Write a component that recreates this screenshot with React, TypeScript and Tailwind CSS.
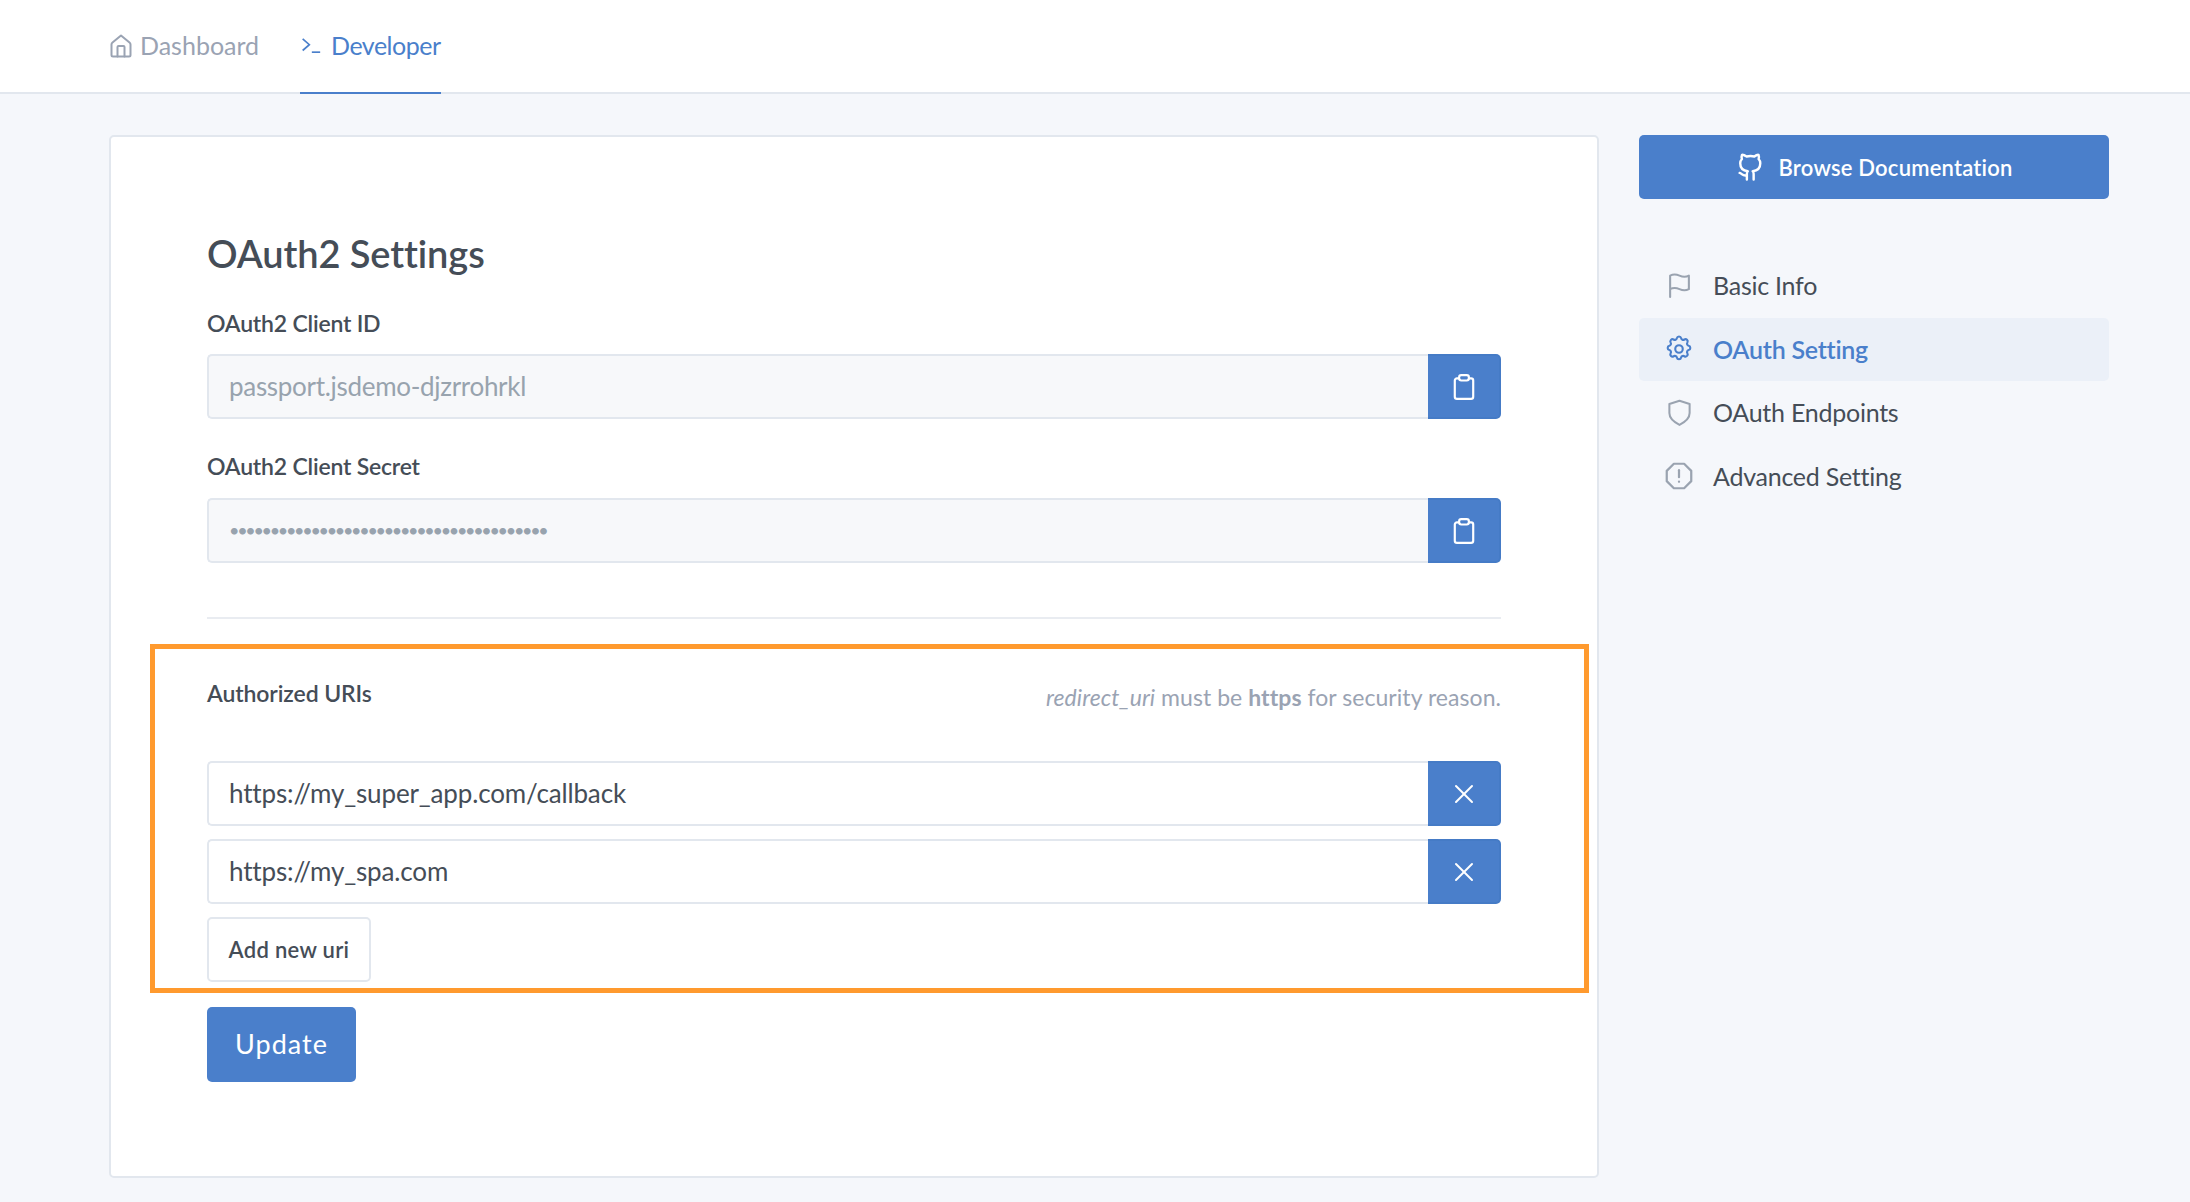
import { FiX } from "react-icons/fi";

function HomeIcon({ className }: { className?: string }) {
  return (
    <svg viewBox="0 0 24 24" fill="none" stroke="currentColor" strokeWidth="2" strokeLinejoin="round" strokeLinecap="round" className={className}>
      <path d="M12 1.500 3.500 8.500c-.6.5-1 1.200-1 2v10.500c0 .8.7 1.500 1.500 1.500h16c.8 0 1.500-.7 1.500-1.500V10.500c0-.8-.4-1.500-1-2z" />
      <path d="M8.500 22.500V13c0-.6.400-1 1-1h5c.6 0 1 .4 1 1v9.500" />
    </svg>
  );
}

function TerminalIcon({ className }: { className?: string }) {
  return (
    <svg viewBox="0 0 24 20" fill="none" stroke="currentColor" strokeWidth="2" className={className}>
      <path d="M2 2l8 7-8 7" />
      <path d="M13 18h10" />
    </svg>
  );
}

function GithubIcon({ className }: { className?: string }) {
  return (
    <svg viewBox="0 0 24 24" fill="none" stroke="currentColor" strokeWidth="2" strokeLinecap="round" strokeLinejoin="round" className={className}>
      <path d="M9 22v-4.500c-.1-.9.200-1.800.800-2.400C6.800 14.800 3.500 13.500 3.500 8.500c0-1.300.5-2.500 1.400-3.500-.4-1.100-.4-2.300.1-3.500 0 0 1.200-.3 3.800 1.400a13 13 0 0 1 6.400 0C17.400 1.200 18.600 1.500 18.600 1.500c.5 1.200.5 2.400.1 3.500.9 1 1.400 2.200 1.400 3.500 0 5-3.300 6.300-6.300 6.600.6.600.9 1.500.800 2.400V22" />
      <path d="M9 18.500c-3.500 1-4-1.500-6-2" />
    </svg>
  );
}

function FlagIcon({ className }: { className?: string }) {
  return (
    <svg viewBox="0 0 24 24" fill="none" stroke="currentColor" strokeWidth="2" strokeLinecap="round" strokeLinejoin="round" className={className}>
      <path d="M3 23V2.500c3-1.500 5.500-1.500 9 0s6 1.500 9 0v13c-3 1.500-5.500 1.500-9 0s-6-1.500-9 0" />
    </svg>
  );
}

function GearIcon({ className }: { className?: string }) {
  return (
    <svg viewBox="0 0 24 24" fill="none" stroke="currentColor" strokeWidth="1.700" strokeLinecap="round" strokeLinejoin="round" className={className}>
      <path d="M10.300 3.300c.4-1.800 3-1.800 3.400 0a1.700 1.700 0 0 0 2.600 1.100c1.500-.9 3.300.8 2.400 2.400a1.700 1.700 0 0 0 1 2.600c1.800.4 1.800 3 0 3.400a1.700 1.700 0 0 0-1 2.600c.9 1.500-.8 3.300-2.400 2.400a1.700 1.700 0 0 0-2.600 1c-.4 1.800-3 1.800-3.400 0a1.700 1.700 0 0 0-2.600-1c-1.500.9-3.300-.8-2.400-2.400a1.700 1.700 0 0 0-1-2.600c-1.800-.4-1.800-3 0-3.400a1.700 1.700 0 0 0 1-2.600c-.9-1.500.8-3.300 2.400-2.400a1.700 1.700 0 0 0 2.600-1.100z" />
      <circle cx="12" cy="12" r="3" />
    </svg>
  );
}

function ShieldIcon({ className }: { className?: string }) {
  return (
    <svg viewBox="0 0 24 24" fill="none" stroke="currentColor" strokeWidth="1.800" strokeLinejoin="round" className={className}>
      <path d="M12 1.500 3 4.500v8c0 4 4 8 9 10.500 5-2.500 9-6.500 9-10.500v-8z" />
    </svg>
  );
}

function AlertIcon({ className }: { className?: string }) {
  return (
    <svg viewBox="0 0 24 24" fill="none" stroke="currentColor" strokeWidth="1.900" strokeLinecap="round" strokeLinejoin="round" className={className}>
      <path d="M7.600 1.500h8.800l6.100 6.100v8.800l-6.100 6.100H7.600l-6.100-6.100V7.600z" />
      <path d="M12 7v6" />
      <path d="M12 16.800v.2" />
    </svg>
  );
}

function ClipboardIcon({ className }: { className?: string }) {
  return (
    <svg viewBox="0 0 24 24" fill="none" stroke="currentColor" strokeWidth="2" strokeLinecap="round" strokeLinejoin="round" className={className}>
      <path d="M7.500 4H5.500a2 2 0 0 0-2 2v15a2 2 0 0 0 2 2h13a2 2 0 0 0 2-2V6a2 2 0 0 0-2-2h-2" />
      <rect x="7.500" y="1" width="9" height="5" rx="2" />
    </svg>
  );
}

function FieldGroup({ value, disabled, icon, masked }: { value: string; disabled?: boolean; icon: "copy" | "remove"; masked?: boolean }) {
  const tone = disabled ? "bg-[#f7f8fa] text-[#98a3ae]" : "bg-white text-[#454d57]";
  const type = masked ? "text-[18px] tracking-[-2.3px]" : disabled ? "text-[26px] tracking-[-0.3px]" : "text-[26px] tracking-[-0.15px]";
  return (
    <div className="flex h-[65px]">
      <div className={`flex min-w-0 flex-1 items-center rounded-l-[5px] border-2 border-r-0 border-[#e2e7ee] pl-[20px] ${tone} ${type}`}>
        {value}
      </div>
      <button type="button" className="flex w-[73px] items-center justify-center rounded-r-[5px] border-2 border-l-0 border-[#457bc6] bg-[#4a7fcb] text-white">
        {icon === "copy" ? <ClipboardIcon className="h-[26px] w-[26px]" /> : <FiX className="h-[32px] w-[32px]" strokeWidth={1.5} />}
      </button>
    </div>
  );
}

const menuItems = [
  { label: "Basic Info", Icon: FlagIcon, size: "h-[25px] w-[25px]" },
  { label: "OAuth Setting", Icon: GearIcon, size: "h-[30px] w-[30px]", active: true },
  { label: "OAuth Endpoints", Icon: ShieldIcon, size: "h-[27px] w-[27px]" },
  { label: "Advanced Setting", Icon: AlertIcon, size: "h-[28px] w-[28px]" },
];

export default function App() {
  return (
    <div className="min-h-[1202px] bg-[#f5f7fb] font-['Lato','Noto_Sans',sans-serif] text-[#454d57]">
      <nav className="flex h-[94px] gap-[41px] border-b-2 border-[#e2e7ee] bg-white pl-[109px]">
        <a className="flex h-[94px] items-center gap-[7px] pb-[2px] text-[25px] text-[#9aa3b3]">
          <HomeIcon className="h-[24px] w-[24px]" />
          Dashboard
        </a>
        <a className="flex h-[94px] items-center gap-[10px] border-b-2 border-[#4a7fcb] pb-[1px] text-[25px] tracking-[-0.5px] text-[#4a7fcb]">
          <TerminalIcon className="ml-[1px] h-[17px] w-[20px]" />
          Developer
        </a>
      </nav>

      <div className="flex items-start pl-[109px] pr-[80px] pt-[41px]">
        <main className="h-[1043px] w-[1490px] rounded-[5px] border-2 border-[#e2e7ee] bg-white pl-[96px] pr-[96px] pt-[92px]">
          <h1 className="text-[38px] font-semibold leading-[48px] tracking-[-0.1px] text-[#454d57]">OAuth2 Settings</h1>

          <label className="mt-[30px] block text-[23px] font-semibold leading-[32px] tracking-[-0.2px]">OAuth2 Client ID</label>
          <div className="mt-[15px]">
            <FieldGroup value="passport.jsdemo-djzrrohrkl" disabled icon="copy" />
          </div>

          <label className="mt-[31px] block text-[23px] font-semibold leading-[32px] tracking-[-0.2px]">OAuth2 Client Secret</label>
          <div className="mt-[16px]">
            <FieldGroup value="•••••••••••••••••••••••••••••••••••••••" disabled masked icon="copy" />
          </div>

          <hr className="mt-[54px] border-0 border-t-2 border-[#e9ecf1]" />

          <section className="-ml-[57px] -mr-[88px] mt-[25px] h-[349px] border-[5px] border-[#ff9a2e] pl-[52px] pr-[83px] pt-[28px]">
            <div className="flex items-start justify-between">
              <h2 className="text-[23px] font-semibold leading-[32px] tracking-[-0.1px]">Authorized URIs</h2>
              <p className="mt-[4px] text-[23px] leading-[32px] tracking-[0.05px] text-[#9aa3b3]">
                <em>redirect_uri</em> must be <strong className="font-bold">https</strong> for security reason.
              </p>
            </div>
            <div className="mt-[48px] flex flex-col gap-[13px]">
              <FieldGroup value="https://my_super_app.com/callback" icon="remove" />
              <FieldGroup value="https://my_spa.com" icon="remove" />
            </div>
            <button type="button" className="mt-[13px] h-[65px] w-[164px] rounded-[5px] border-2 border-[#e2e7ee] bg-white text-[22px] font-semibold tracking-[0.3px]">
              Add new uri
            </button>
          </section>

          <button type="button" className="mt-[14px] h-[75px] w-[149px] rounded-[5px] bg-[#4a7fcb] text-[27px] tracking-[1px] text-white">
            Update
          </button>
        </main>

        <aside className="ml-[40px] w-[470px]">
          <button type="button" className="flex h-[64px] w-full items-center justify-center gap-[14px] rounded-[5px] bg-[#4a7fcb] text-[22px] font-semibold tracking-[0.2px] text-white">
            <GithubIcon className="h-[29px] w-[29px]" />
            Browse Documentation
          </button>
          <ul className="mt-[55px]">
            {menuItems.map(({ label, Icon, size, active }) => (
              <li
                key={label}
                className={`flex h-[63.5px] items-center rounded-[5px] text-[25px] tracking-[-0.25px] ${active ? "bg-[#ebf0f8] font-semibold text-[#4a7fcb]" : "text-[#454d57]"}`}
              >
                <span className={`flex w-[74px] justify-center pl-[6px] ${active ? "text-[#4a7fcb]" : "text-[#9aa3b0]"}`}>
                  <Icon className={size} />
                </span>
                {label}
              </li>
            ))}
          </ul>
        </aside>
      </div>
    </div>
  );
}
